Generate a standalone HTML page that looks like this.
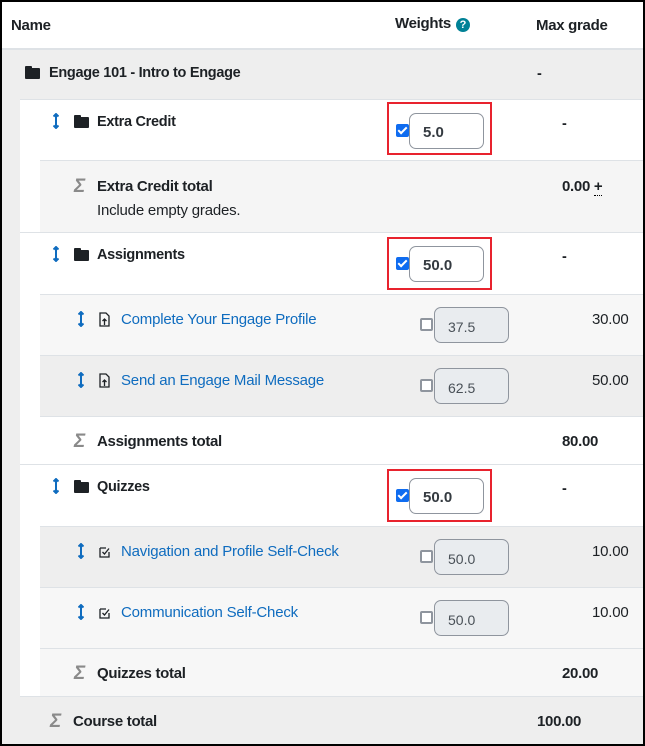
<!DOCTYPE html>
<html><head><meta charset="utf-8"><style>
*{margin:0;padding:0;box-sizing:border-box}
body{width:645px;height:746px;position:relative;overflow:hidden;font-family:"Liberation Sans",Arial,sans-serif;color:#1d2125;background:#fff}
.a{position:absolute}
.b{font-weight:bold;font-size:14.5px;letter-spacing:-0.3px}
.r{font-size:15px;letter-spacing:-0.2px}
.lnk{color:#0f6cbf}
.red{position:absolute;border:2px solid #e8232e;width:105px;height:53px}
.inp{position:absolute;border:1px solid #8f959e;border-radius:7px;width:75px;height:36px;font-size:15px;padding:10px 0 0 13px}
.inp.w{background:#fff;font-weight:bold;color:#343a40}
.inp.g{background:#e9ecef;color:#495057;font-size:14px;padding-top:11px}
.cbc{position:absolute;width:13px;height:13px;background:#0f6cf0;border-radius:2px}
.cbc:after{content:"";position:absolute;left:4px;top:1px;width:3px;height:7px;border:solid #fff;border-width:0 2px 2px 0;transform:rotate(45deg)}
.cbu{position:absolute;width:13px;height:13px;border:2px solid #8f959e;border-radius:2px;background:#fff}
.arr{position:absolute;width:6px;height:16px}
.sig{position:absolute;font-size:19px;color:#8a8a8a;font-style:italic;font-weight:bold;font-family:"Liberation Sans",sans-serif}
.fold{position:absolute;width:15px;height:11px;background:#1d2125;border-radius:1px}
.fold:before{content:"";position:absolute;left:0;top:-2px;width:7px;height:3px;background:#1d2125;border-radius:1px 1px 0 0}
.line{position:absolute;height:1px;background:#dee2e6}
</style></head><body>
<div class="a" style="left:0;top:49px;width:645px;height:697px;background:#eee"></div>
<div class="a" style="left:20px;top:99px;width:625px;height:598px;background:#fff"></div>
<div class="a" style="left:40px;top:160px;width:605px;height:72px;background:#f5f5f5"></div>
<div class="a" style="left:40px;top:294px;width:605px;height:61px;background:#f7f7f7"></div>
<div class="a" style="left:40px;top:355px;width:605px;height:61px;background:#eee"></div>
<div class="a" style="left:40px;top:526px;width:605px;height:61px;background:#eee"></div>
<div class="a" style="left:40px;top:587px;width:605px;height:110px;background:#f7f7f7"></div>
<div class="line" style="left:0;top:48px;width:645px;height:2px"></div>
<div class="line" style="left:20px;top:99px;width:625px"></div>
<div class="line" style="left:40px;top:160px;width:605px"></div>
<div class="line" style="left:20px;top:232px;width:625px"></div>
<div class="line" style="left:40px;top:294px;width:605px"></div>
<div class="line" style="left:40px;top:355px;width:605px"></div>
<div class="line" style="left:40px;top:416px;width:605px"></div>
<div class="line" style="left:20px;top:464px;width:625px"></div>
<div class="line" style="left:40px;top:526px;width:605px"></div>
<div class="line" style="left:40px;top:587px;width:605px"></div>
<div class="line" style="left:40px;top:648px;width:605px"></div>
<div class="line" style="left:20px;top:696px;width:625px"></div>

<div class="a b" style="left:11px;top:17px;font-size:15px">Name</div>
<div class="a b" style="left:395px;top:15px;font-size:15px">Weights</div>
<div class="a" style="left:456px;top:18px;width:14px;height:14px;border-radius:50%;background:#008196;color:#fff;font-size:11px;font-weight:bold;text-align:center;line-height:14px">?</div>
<div class="a b" style="left:536px;top:17px;font-size:15px">Max grade</div>

<div class="fold" style="left:25px;top:68px"></div>
<div class="a b" style="left:49px;top:65px">Engage 101 - Intro to Engage</div>
<div class="a b" style="left:537px;top:66px">-</div>

<svg class="arr" style="left:53px;top:113px" viewBox="0 0 6 16"><path d="M3 1V15M0.5 3.5L3 1L5.5 3.5M0.5 12.5L3 15L5.5 12.5" stroke="#0f6cbf" stroke-width="2" fill="none"/></svg>
<div class="fold" style="left:74px;top:117px"></div>
<div class="a b" style="left:97px;top:114px">Extra Credit</div>
<div class="red" style="left:387px;top:102px"></div>
<div class="cbc" style="left:396px;top:124px"></div>
<div class="inp w" style="left:409px;top:113px">5.0</div>
<div class="a b" style="left:562px;top:116px">-</div>

<div class="sig" style="left:74px;top:176px">Σ</div>
<div class="a b" style="left:97px;top:178px;font-size:15px">Extra Credit total</div>
<div class="a r" style="left:97px;top:202px">Include empty grades.</div>
<div class="a b" style="left:562px;top:178px;font-size:15px">0.00 <span style="border-bottom:1px dotted #000">+</span></div>

<svg class="arr" style="left:53px;top:246px" viewBox="0 0 6 16"><path d="M3 1V15M0.5 3.5L3 1L5.5 3.5M0.5 12.5L3 15L5.5 12.5" stroke="#0f6cbf" stroke-width="2" fill="none"/></svg>
<div class="fold" style="left:74px;top:250px"></div>
<div class="a b" style="left:97px;top:247px">Assignments</div>
<div class="red" style="left:387px;top:237px"></div>
<div class="cbc" style="left:396px;top:257px"></div>
<div class="inp w" style="left:409px;top:246px">50.0</div>
<div class="a b" style="left:562px;top:249px">-</div>

<svg class="arr" style="left:78px;top:311px" viewBox="0 0 6 16"><path d="M3 1V15M0.5 3.5L3 1L5.5 3.5M0.5 12.5L3 15L5.5 12.5" stroke="#0f6cbf" stroke-width="2" fill="none"/></svg>
<svg class="a" style="left:99px;top:312px" width="11" height="15" viewBox="0 0 11 15"><path d="M1 1H7L10 4V14H1Z" fill="none" stroke="#1d2125" stroke-width="1.3"/><path d="M5.5 13V7M3.5 9L5.5 7L7.5 9" stroke="#1d2125" stroke-width="1.3" fill="none"/></svg>
<div class="a r lnk" style="left:121px;top:311px">Complete Your Engage Profile</div>
<div class="cbu" style="left:420px;top:318px"></div>
<div class="inp g" style="left:434px;top:307px">37.5</div>
<div class="a r" style="left:592px;top:311px">30.00</div>

<svg class="arr" style="left:78px;top:372px" viewBox="0 0 6 16"><path d="M3 1V15M0.5 3.5L3 1L5.5 3.5M0.5 12.5L3 15L5.5 12.5" stroke="#0f6cbf" stroke-width="2" fill="none"/></svg>
<svg class="a" style="left:99px;top:373px" width="11" height="15" viewBox="0 0 11 15"><path d="M1 1H7L10 4V14H1Z" fill="none" stroke="#1d2125" stroke-width="1.3"/><path d="M5.5 13V7M3.5 9L5.5 7L7.5 9" stroke="#1d2125" stroke-width="1.3" fill="none"/></svg>
<div class="a r lnk" style="left:121px;top:372px">Send an Engage Mail Message</div>
<div class="cbu" style="left:420px;top:379px"></div>
<div class="inp g" style="left:434px;top:368px">62.5</div>
<div class="a r" style="left:592px;top:372px">50.00</div>

<div class="sig" style="left:74px;top:431px">Σ</div>
<div class="a b" style="left:97px;top:433px;font-size:15px">Assignments total</div>
<div class="a b" style="left:562px;top:433px;font-size:15px">80.00</div>

<svg class="arr" style="left:53px;top:478px" viewBox="0 0 6 16"><path d="M3 1V15M0.5 3.5L3 1L5.5 3.5M0.5 12.5L3 15L5.5 12.5" stroke="#0f6cbf" stroke-width="2" fill="none"/></svg>
<div class="fold" style="left:74px;top:482px"></div>
<div class="a b" style="left:97px;top:479px">Quizzes</div>
<div class="red" style="left:387px;top:469px"></div>
<div class="cbc" style="left:396px;top:489px"></div>
<div class="inp w" style="left:409px;top:478px">50.0</div>
<div class="a b" style="left:562px;top:481px">-</div>

<svg class="arr" style="left:78px;top:543px" viewBox="0 0 6 16"><path d="M3 1V15M0.5 3.5L3 1L5.5 3.5M0.5 12.5L3 15L5.5 12.5" stroke="#0f6cbf" stroke-width="2" fill="none"/></svg>
<svg class="a" style="left:99px;top:546px" width="12" height="12" viewBox="0 0 12 12"><path d="M1 2H7M1 2V11H10V6" stroke="#1d2125" stroke-width="1.3" fill="none"/><path d="M3.5 6L5.5 8L10 2.5" stroke="#1d2125" stroke-width="1.3" fill="none"/></svg>
<div class="a r lnk" style="left:121px;top:543px">Navigation and Profile Self-Check</div>
<div class="cbu" style="left:420px;top:550px"></div>
<div class="inp g" style="left:434px;top:539px">50.0</div>
<div class="a r" style="left:592px;top:543px">10.00</div>

<svg class="arr" style="left:78px;top:604px" viewBox="0 0 6 16"><path d="M3 1V15M0.5 3.5L3 1L5.5 3.5M0.5 12.5L3 15L5.5 12.5" stroke="#0f6cbf" stroke-width="2" fill="none"/></svg>
<svg class="a" style="left:99px;top:607px" width="12" height="12" viewBox="0 0 12 12"><path d="M1 2H7M1 2V11H10V6" stroke="#1d2125" stroke-width="1.3" fill="none"/><path d="M3.5 6L5.5 8L10 2.5" stroke="#1d2125" stroke-width="1.3" fill="none"/></svg>
<div class="a r lnk" style="left:121px;top:604px">Communication Self-Check</div>
<div class="cbu" style="left:420px;top:611px"></div>
<div class="inp g" style="left:434px;top:600px">50.0</div>
<div class="a r" style="left:592px;top:604px">10.00</div>

<div class="sig" style="left:74px;top:663px">Σ</div>
<div class="a b" style="left:97px;top:665px;font-size:15px">Quizzes total</div>
<div class="a b" style="left:562px;top:665px;font-size:15px">20.00</div>

<div class="sig" style="left:50px;top:711px">Σ</div>
<div class="a b" style="left:73px;top:713px;font-size:15px">Course total</div>
<div class="a b" style="left:537px;top:713px;font-size:15px">100.00</div>

<div class="a" style="left:0;top:0;width:645px;height:746px;border:2px solid #000"></div>
</body></html>
